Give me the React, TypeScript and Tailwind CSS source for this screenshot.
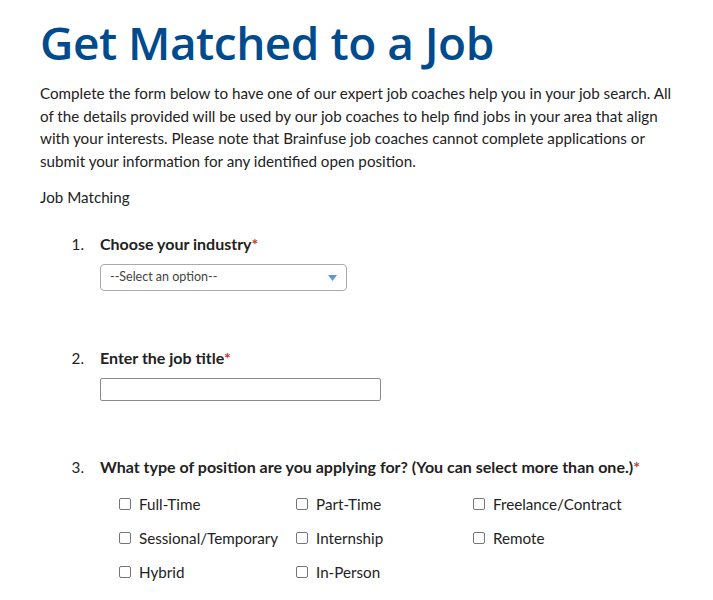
import React from 'react';

const options = [
  'Full-Time', 'Part-Time', 'Freelance/Contract',
  'Sessional/Temporary', 'Internship', 'Remote',
  'Hybrid', 'In-Person',
];

const Req = () => <span className="text-[#c0392b]">*</span>;

export default function App() {
  return (
    <div className="min-h-[600px] bg-white px-[40px] text-[#222] font-['Lato',sans-serif]">
      <h1 className="pt-[14px] text-[46px] leading-[56px] font-semibold text-[#004b8d] tracking-[-0.5px] font-['Open_Sans',sans-serif]">
        Get Matched to a Job
      </h1>
      <p className="mt-[12px] text-[15.2px] leading-[22.5px]">
        Complete the form below to have one of our expert job coaches help you in your job search. All of the details provided will be used by our job coaches to help find jobs in your area that align with your interests. Please note that Brainfuse job coaches cannot complete applications or submit your information for any identified open position.
      </p>
      <div className="mt-[14px] text-[15.2px] leading-[22px]">Job Matching</div>

      <div className="mt-[25px] flex text-[15.2px]">
        <span className="w-[60px] text-right pr-[16px]">1.</span>
        <div className="flex-1">
          <div className="font-bold text-[16px] leading-[22px]">Choose your industry<Req /></div>
          <div className="mt-[9px] w-[247px] h-[27px] border border-[#aaa] rounded-[4px] flex items-center justify-between px-[9px] text-[12.5px] text-[#444]">
            <span>--Select an option--</span>
            <svg width="9" height="6" viewBox="0 0 9 6"><path d="M0 0h9L4.5 6z" fill="#5b9bd5" /></svg>
          </div>
        </div>
      </div>

      <div className="mt-[56px] flex text-[15.2px]">
        <span className="w-[60px] text-right pr-[16px]">2.</span>
        <div className="flex-1">
          <div className="font-bold text-[16px] leading-[22px]">Enter the job title<Req /></div>
          <div className="mt-[9px] w-[281px] h-[23px] border border-[#8a8a8a] rounded-[2px]" />
        </div>
      </div>

      <div className="mt-[55px] flex text-[15.2px]">
        <span className="w-[60px] text-right pr-[16px]">3.</span>
        <div className="flex-1">
          <div className="font-bold text-[16px] leading-[22px]">What type of position are you applying for? (You can select more than one.)<Req /></div>
          <div className="mt-[15px] grid grid-cols-[177px_177px_177px] gap-y-[12px] pl-[19px]">
            {options.map(o => (
              <label key={o} className="flex items-center gap-[8px] leading-[22px]">
                <span className="w-[12px] h-[12px] border border-[#767676] rounded-[2px] bg-white" />
                <span>{o}</span>
              </label>
            ))}
          </div>
        </div>
      </div>
    </div>
  );
}
